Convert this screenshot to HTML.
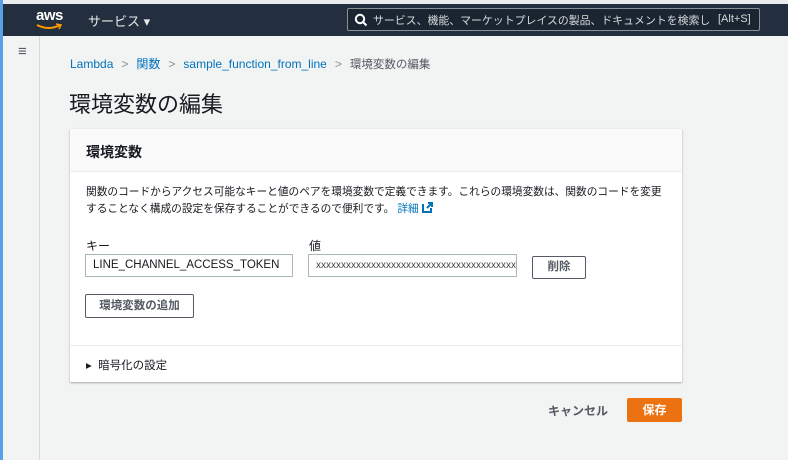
<!DOCTYPE html>
<html><head><meta charset="utf-8"><style>
*{margin:0;padding:0;box-sizing:border-box}
body{width:788px;height:460px;overflow:hidden;background:#f2f3f3;font-family:"Liberation Sans","Noto Sans CJK JP",sans-serif;position:relative;color:#16191f}
.abs{position:absolute}
</style></head><body>
<div class="abs" style="left:0;top:0;width:788px;height:4px;background:#e9ebed"></div>
<div class="abs" style="left:0;top:4px;width:788px;height:32px;background:#232f3e"></div>
<div class="abs" style="left:0;top:0;width:3px;height:460px;background:#5aa0e8"></div>
<div class="abs" style="left:36px;top:7px;color:#fff;font-size:15px;font-weight:bold;letter-spacing:-0.5px">aws</div>
<svg class="abs" style="left:36px;top:23px" width="26" height="8"><path d="M1 2 Q13 8 24 2" stroke="#f90" stroke-width="2" fill="none"/><path d="M20 1 L25 2 L23 6" stroke="#f90" stroke-width="1.5" fill="none"/></svg>
<div class="abs" style="left:88px;top:11px;color:#e8e8e8;font-size:13px">サービス ▾</div>
<div class="abs" style="left:347px;top:8px;width:413px;height:23px;border:1px solid #879196;border-radius:2px;background:#1b2532"></div>
<svg class="abs" style="left:354px;top:13px" width="14" height="14"><circle cx="6" cy="6" r="4.2" stroke="#fff" stroke-width="2" fill="none"/><path d="M9 9 L12.5 12.5" stroke="#fff" stroke-width="2"/></svg>
<div class="abs" style="left:373px;top:12px;color:#d5dbdb;font-size:10.9px;white-space:nowrap">サービス、機能、マーケットプレイスの製品、ドキュメントを検索し</div>
<div class="abs" style="left:718px;top:13px;color:#d5dbdb;font-size:11px;white-space:nowrap">[Alt+S]</div>
<div class="abs" style="left:3px;top:36px;width:37px;height:424px;background:#f2f3f3;border-right:1px solid #d5dbdb"></div>
<div class="abs" style="left:18px;top:43px;color:#545b64;font-size:15px">≡</div>
<div class="abs" style="left:70px;top:55px;font-size:12px;color:#0073bb;white-space:nowrap">Lambda<span style="color:#879196;margin:0 8px">&gt;</span>関数<span style="color:#879196;margin:0 8px">&gt;</span>sample_function_from_line<span style="color:#879196;margin:0 8px">&gt;</span><span style="color:#545b64;font-size:11.5px">環境変数の編集</span></div>
<div class="abs" style="left:69px;top:87px;font-size:22px;color:#16191f">環境変数の編集</div>
<div class="abs" style="left:70px;top:129px;width:612px;height:253px;background:#fff;box-shadow:0 1px 2px rgba(0,0,0,.3);border-top:1px solid #eaeded"></div>
<div class="abs" style="left:70px;top:129px;width:612px;height:43px;background:#fafafa;border-bottom:1px solid #eaeded"></div>
<div class="abs" style="left:86px;top:142px;font-size:14px;font-weight:bold">環境変数</div>
<div class="abs" style="left:86px;top:184px;font-size:10.7px;line-height:17px;color:#16191f;white-space:nowrap">関数のコードからアクセス可能なキーと値のペアを環境変数で定義できます。これらの環境変数は、関数のコードを変更<br>することなく構成の設定を保存することができるので便利です。 <span style="color:#0073bb">詳細 <svg width="11" height="11" style="vertical-align:-1px"><path d="M1 2 V10 H9 V6" stroke="#0073bb" stroke-width="2" fill="none"/><path d="M5 6 L10 1 M6 1 H10 V5" stroke="#0073bb" stroke-width="2" fill="none"/></svg></span></div>
<div class="abs" style="left:86px;top:237px;font-size:12px">キー</div>
<div class="abs" style="left:309px;top:237px;font-size:12px">値</div>
<div class="abs" style="left:85px;top:254px;width:208px;height:23px;border:1px solid #aab7b8;font-size:11.5px;padding:4px 7px">LINE_CHANNEL_ACCESS_TOKEN</div>
<div class="abs" style="left:308px;top:254px;width:209px;height:23px;border:1px solid #aab7b8;font-size:10px;padding:5px 7px;overflow:hidden;white-space:nowrap;color:#444">xxxxxxxxxxxxxxxxxxxxxxxxxxxxxxxxxxxxxxxxxx</div>
<div class="abs" style="left:532px;top:256px;width:54px;height:23px;border:1px solid #545b64;font-size:11.5px;font-weight:bold;color:#545b64;text-align:center;line-height:21px;border-radius:2px">削除</div>
<div class="abs" style="left:85px;top:294px;width:109px;height:24px;border:1px solid #545b64;font-size:11.5px;font-weight:bold;color:#545b64;text-align:center;line-height:22px;border-radius:2px">環境変数の追加</div>
<div class="abs" style="left:70px;top:345px;width:612px;height:1px;background:#eaeded"></div>
<div class="abs" style="left:86px;top:357px;font-size:11.5px;color:#16191f">▸&nbsp; 暗号化の設定</div>
<div class="abs" style="left:548px;top:402px;font-size:12px;font-weight:bold;color:#545b64">キャンセル</div>
<div class="abs" style="left:627px;top:398px;width:55px;height:24px;background:#ec7211;border-radius:2px;color:#fff;font-size:12px;font-weight:bold;text-align:center;line-height:24px">保存</div>
</body></html>
